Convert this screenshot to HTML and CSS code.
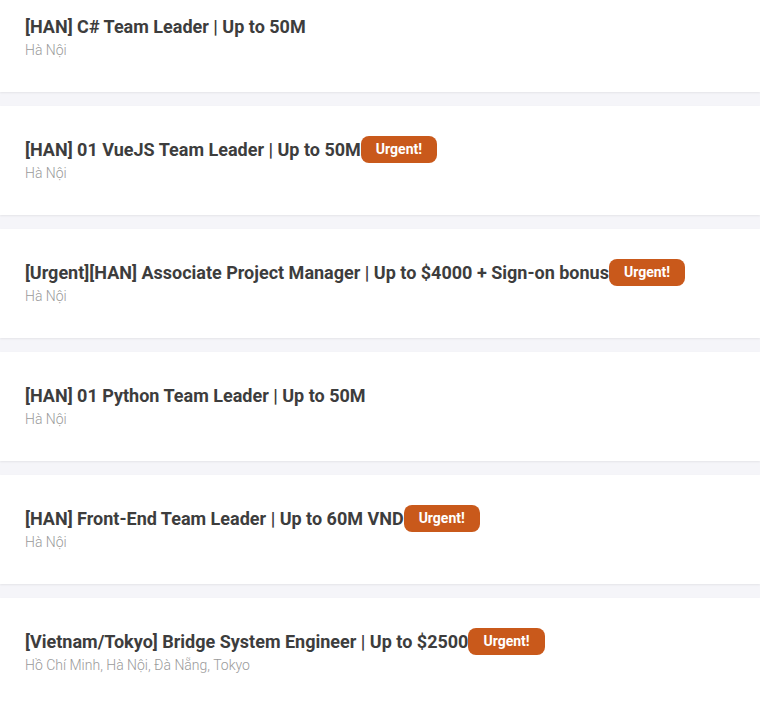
FILE: index.html
```html
<!DOCTYPE html>
<html>
<head>
<meta charset="utf-8">
<link rel="stylesheet" href="styles.css">
</head>
<body>
<div class="list">
  <div class="job">
    <div class="title-row"><span class="title">[HAN] C# Team Leader | Up to 50M</span></div>
    <div class="loc">Hà Nội</div>
  </div>
  <div class="job">
    <div class="title-row"><span class="title">[HAN] 01 VueJS Team Leader | Up to 50M</span><span class="badge">Urgent!</span></div>
    <div class="loc">Hà Nội</div>
  </div>
  <div class="job">
    <div class="title-row"><span class="title">[Urgent][HAN] Associate Project Manager | Up to $4000 + Sign-on bonus</span><span class="badge">Urgent!</span></div>
    <div class="loc">Hà Nội</div>
  </div>
  <div class="job">
    <div class="title-row"><span class="title">[HAN] 01 Python Team Leader | Up to 50M</span></div>
    <div class="loc">Hà Nội</div>
  </div>
  <div class="job">
    <div class="title-row"><span class="title">[HAN] Front-End Team Leader | Up to 60M VND</span><span class="badge">Urgent!</span></div>
    <div class="loc">Hà Nội</div>
  </div>
  <div class="job">
    <div class="title-row"><span class="title">[Vietnam/Tokyo] Bridge System Engineer | Up to $2500</span><span class="badge">Urgent!</span></div>
    <div class="loc">Hồ Chí Minh, Hà Nội, Đà Nẵng, Tokyo</div>
  </div>
</div>
</body>
</html>
```
FILE: styles.css
```css
html, body {
  margin: 0;
  padding: 0;
  background: #f5f5f9;
  overflow: hidden;
}
body {
  font-family: Roboto, "Liberation Sans", sans-serif;
}
.list {
  margin-top: -17px;
  display: flex;
  flex-direction: column;
  gap: 14px;
}
.job {
  background: #fff;
  padding: 32px 25px 32px;
  box-shadow: 0 1px 2px rgba(0, 0, 0, 0.07);
}
.title-row {
  display: flex;
  align-items: center;
  height: 24px;
}
.title {
  font-size: 18px;
  font-weight: 700;
  color: #3d3d3d;
  line-height: 24px;
}
.badge {
  background: #c9591b;
  color: #fff;
  font-size: 14px;
  font-weight: 700;
  line-height: 27px;
  height: 27px;
  padding: 0 15px;
  border-radius: 8px;
  position: relative;
  top: -1px;
}
.loc {
  margin-top: 1px;
  font-size: 14px;
  font-weight: 300;
  color: #9a9a9a;
  line-height: 20px;
}
```
